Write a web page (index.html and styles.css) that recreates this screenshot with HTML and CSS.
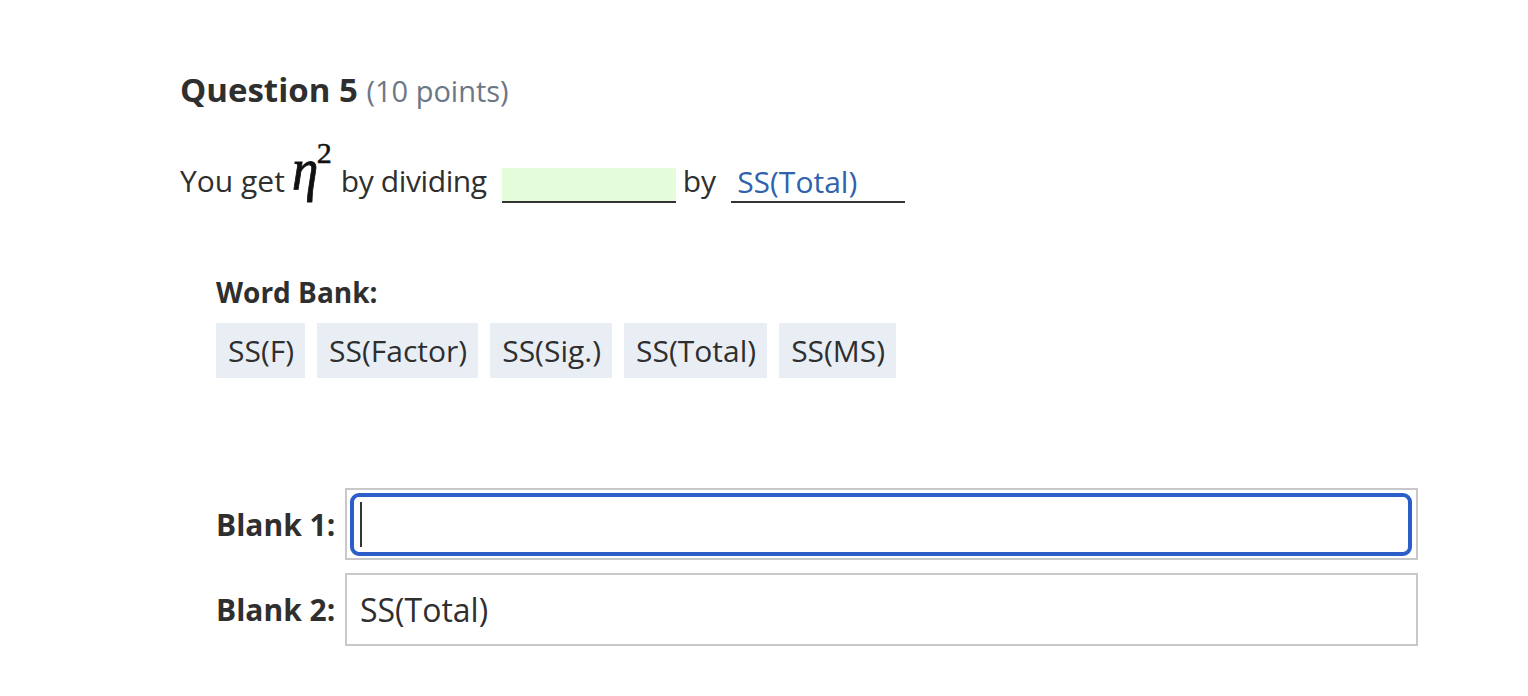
FILE: index.html
```html
<!DOCTYPE html>
<html>
<head>
<meta charset="utf-8">
<link rel="stylesheet" href="styles.css">
</head>
<body>
<div class="page">
  <h1 class="title">Question 5 <span class="points">(10 points)</span></h1>
  <div class="prompt">
    <span class="txt">You get</span>
    <span class="eta"><span class="eta-sym">η</span><span class="eta-sup">2</span></span>
    <span class="txt txt-after-eta">by dividing</span>
    <span class="blank blank-empty"></span>
    <span class="txt txt-by">by</span>
    <span class="blank blank-filled">SS(Total)</span>
  </div>
  <div class="bank">
    <div class="bank-title">Word Bank:</div>
    <div class="chips">
      <span class="chip">SS(F)</span>
      <span class="chip">SS(Factor)</span>
      <span class="chip">SS(Sig.)</span>
      <span class="chip">SS(Total)</span>
      <span class="chip">SS(MS)</span>
    </div>
  </div>
  <div class="answers">
    <div class="answer-row">
      <label class="answer-label">Blank 1:</label>
      <div class="field field-focus"><div class="field-inner focused"><span class="caret"></span></div></div>
    </div>
    <div class="answer-row">
      <label class="answer-label">Blank 2:</label>
      <div class="field field-plain"><div class="field-inner">SS(Total)</div></div>
    </div>
  </div>
</div>
</body>
</html>
```
FILE: styles.css
```css
html, body {
  margin: 0;
  padding: 0;
  background: #ffffff;
}
body {
  font-family: "Open Sans", "Noto Sans", sans-serif;
  color: #2f2f2f;
}
.page {
  padding: 68px 0 0 180px;
  width: 1260px;
}
.title {
  margin: 0;
  font-size: 33px;
  font-weight: 700;
  color: #2f2f2f;
  line-height: 44px;
  white-space: nowrap;
}
.points {
  font-size: 29px;
  font-weight: 400;
  color: #6b7785;
}
.prompt {
  margin-top: 28px;
  height: 62px;
  display: flex;
  align-items: flex-end;
  font-size: 30px;
  white-space: nowrap;
}
.txt {
  line-height: 44px;
}
.txt-after-eta {
  margin-left: 9px;
  letter-spacing: -0.4px;
}
.txt-by {
  margin-left: 7px;
}
.eta {
  display: flex;
  height: 62px;
  margin-left: 7px;
  font-family: "Liberation Serif", "DejaVu Serif", serif;
  color: #111;
}
.eta-sym {
  align-self: flex-end;
  display: block;
  width: 25px;
  font-size: 60px;
  line-height: 62px;
  font-style: italic;
  margin-bottom: 3px;
  -webkit-text-stroke: 0.9px #111;
  transform: scaleX(0.88);
  transform-origin: left bottom;
}
.eta-sup {
  align-self: flex-start;
  display: block;
  font-size: 30px;
  line-height: 30px;
  margin-top: -3px;
  -webkit-text-stroke: 0.5px #111;
}
.blank {
  display: block;
  width: 174px;
  height: 33px;
  border-bottom: 2px solid #333;
  line-height: 28px;
  box-sizing: content-box;
}
.blank-empty {
  background: #e5fcdb;
  margin-left: 15px;
}
.blank-filled {
  color: #2f62ad;
  padding-left: 6px;
  width: 168px;
  margin-left: 15px;
}
.bank {
  margin: 72px 0 0 36px;
}
.bank-title {
  font-size: 28px;
  font-weight: 700;
  line-height: 34px;
}
.chips {
  display: flex;
  gap: 12px;
  margin-top: 14px;
}
.chip {
  background: #e9eef5;
  font-size: 30px;
  padding: 7px 11px 7px 12px;
  line-height: 41px;
}
.answers {
  margin: 110px 0 0 36px;
  display: flex;
  flex-direction: column;
  gap: 13px;
}
.answer-row {
  display: flex;
  align-items: center;
}
.answer-label {
  font-size: 30px;
  font-weight: 700;
  width: 129px;
  color: #2f2f2f;
}
.field {
  width: 1073px;
  box-sizing: border-box;
  border: 2px solid #c8c8c8;
}
.field-focus {
  height: 72px;
  padding: 3px 4px 2px 3px;
}
.field-plain {
  height: 73px;
}
.field-inner {
  box-sizing: border-box;
  height: 100%;
  display: flex;
  align-items: center;
  padding-left: 13px;
  font-size: 32px;
  color: #2f2f2f;
}
.field-inner.focused {
  border: 4px solid #2b5ec8;
  border-radius: 9px;
  padding-left: 6px;
}
.caret {
  width: 2px;
  height: 45px;
  background: #333;
}
```
